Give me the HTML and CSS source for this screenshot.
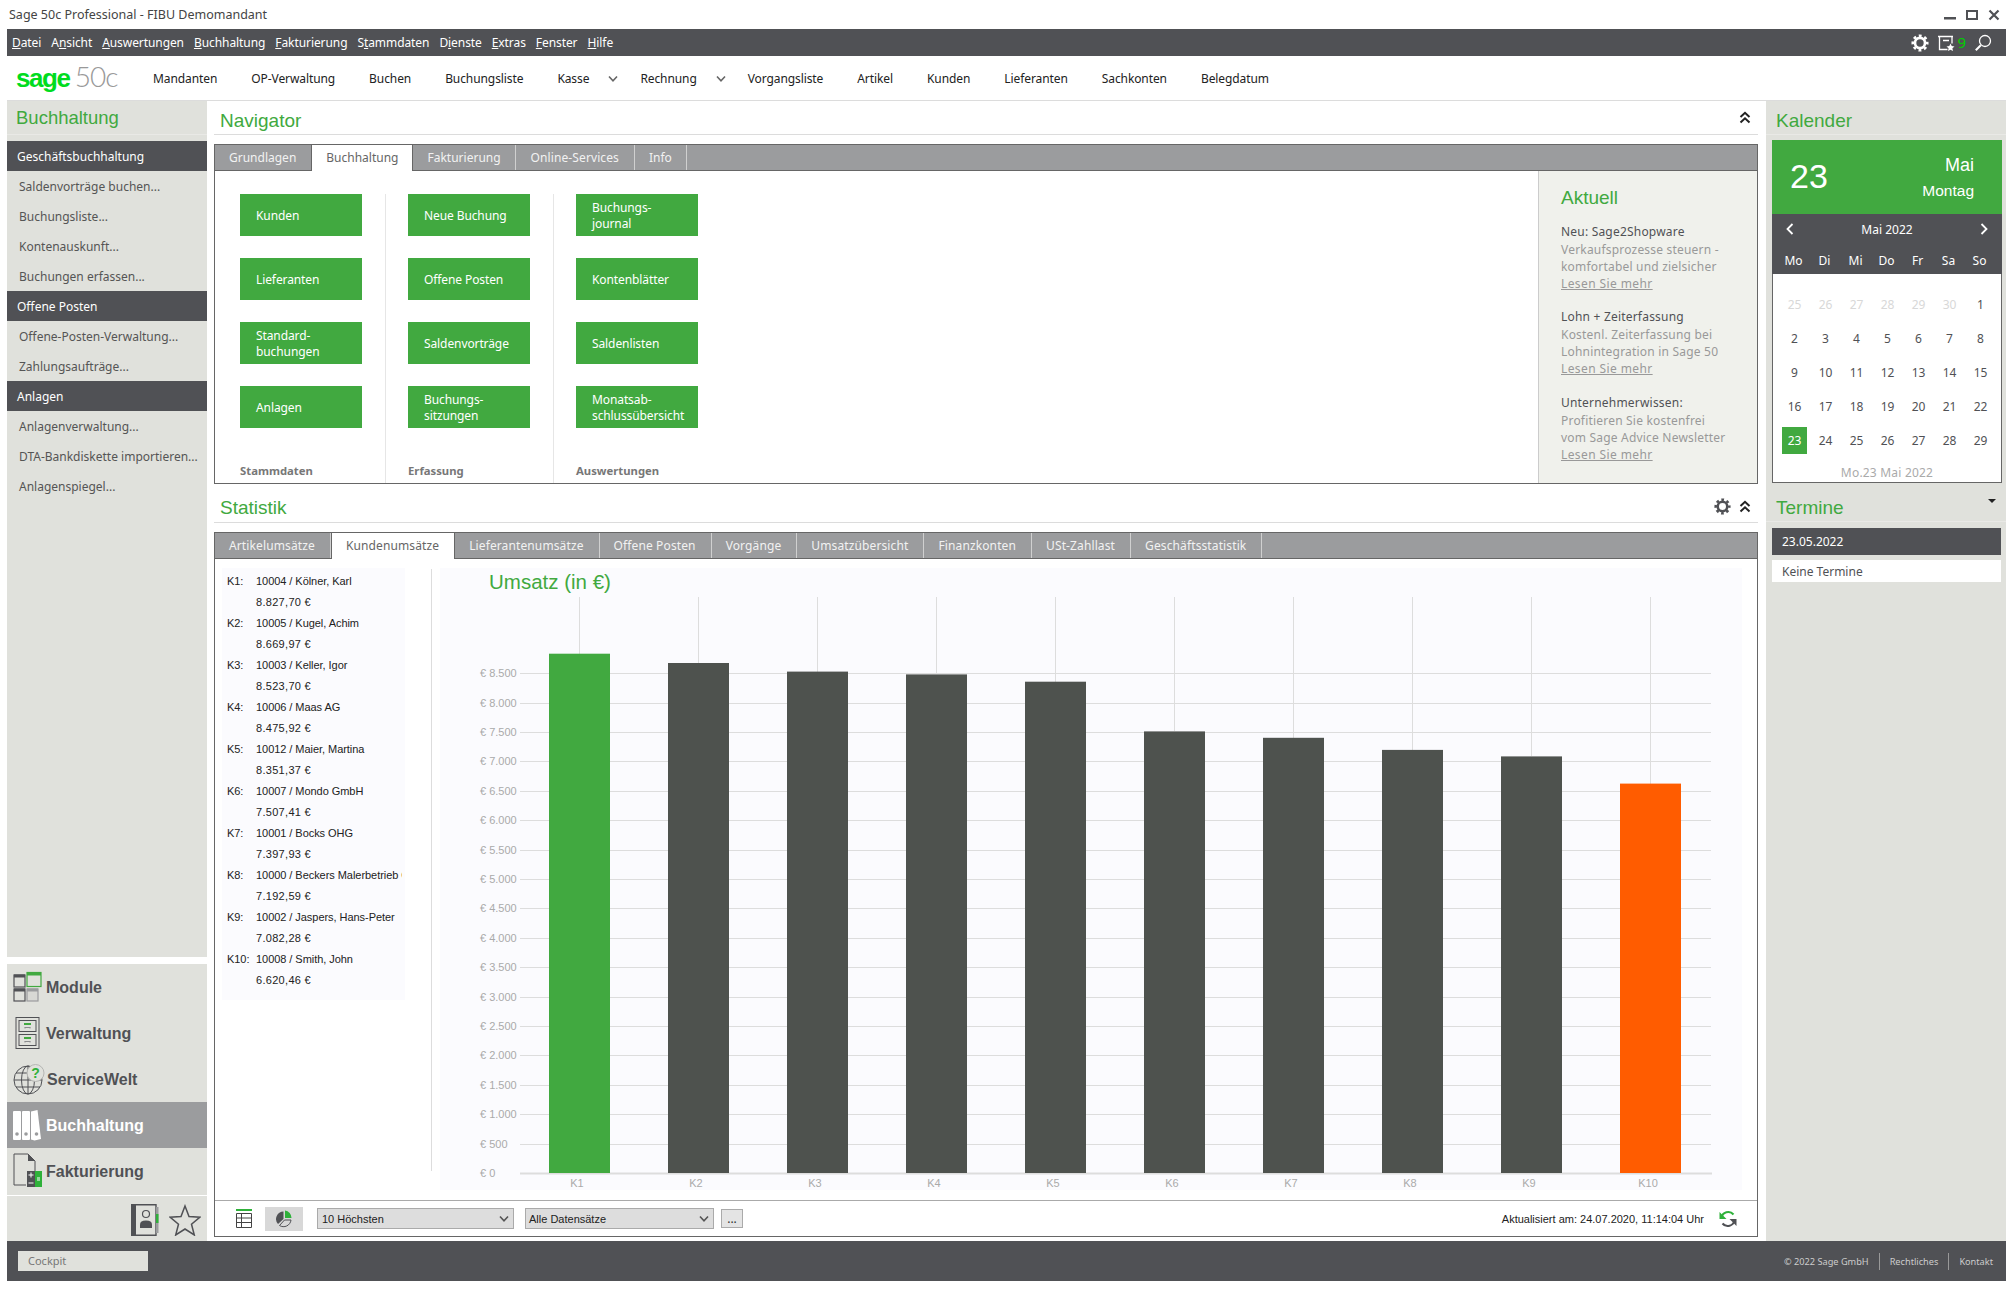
FILE: index.html
```html
<!DOCTYPE html>
<html lang="de">
<head>
  <meta charset="UTF-8" />
  <title>Sage 50c Professional - FIBU Demomandant</title>
  <link rel="stylesheet" href="styles.css">
</head>
<body>

<svg class="sprites" width="0" height="0">
  <symbol id="gear" viewBox="0 0 20 20">
    <circle cx="10" cy="10" r="5.6" fill="none" stroke="currentColor" stroke-width="3"/>
    <circle cx="10" cy="10" r="8" fill="none" stroke="currentColor" stroke-width="3" stroke-dasharray="3.14 3.14" stroke-dashoffset="1.57"/>
  </symbol>
  <symbol id="collapse" viewBox="0 0 12 13">
    <path d="M1.5 6 6 1.8 10.500 6M1.500 11.500 6 7.300l4.500 4.200" fill="none" stroke="currentColor" stroke-width="2"/>
  </symbol>
  <symbol id="chevron" viewBox="0 0 10 8">
    <path d="M1 1.500 5 5.800l4-4.300" fill="none" stroke="currentColor" stroke-width="1.600"/>
  </symbol>
</svg>

<div class="titlebar">
  <span class="title-text">Sage 50c Professional - FIBU Demomandant</span>
  <div class="window-btns">
    <svg width="12" height="12" viewBox="0 0 12 12"><rect x="0" y="8" width="12" height="2.500" fill="#505155"/></svg>
    <svg width="12" height="12" viewBox="0 0 12 12"><rect x="1" y="2" width="10" height="8" fill="none" stroke="#505155" stroke-width="2"/></svg>
    <svg width="12" height="12" viewBox="0 0 12 12"><path d="M1.500 1.500l9 9M10.500 1.500l-9 9" stroke="#505155" stroke-width="2.200"/></svg>
  </div>
</div>

<div class="menubar">
  <span><u>D</u>atei</span>
  <span>A<u>n</u>sicht</span>
  <span><u>A</u>uswertungen</span>
  <span><u>B</u>uchhaltung</span>
  <span><u>F</u>akturierung</span>
  <span>S<u>t</u>ammdaten</span>
  <span>D<u>i</u>enste</span>
  <span><u>E</u>xtras</span>
  <span><u>F</u>enster</span>
  <span><u>H</u>ilfe</span>
  <div class="menu-tools">
    <svg class="tool-gear" width="18" height="18"><use href="#gear"/></svg>
    <svg class="tool-archive" width="18" height="18" viewBox="0 0 18 18">
      <path d="M1 2.500h15M2.500 2.500v13h8M15 2.500v7M6 6.500h6" fill="none" stroke="#fff" stroke-width="1.300"/>
      <path d="M13.500 9.500l1.200 2.600 2.800.3-2.100 1.900.6 2.800-2.500-1.400-2.500 1.400.6-2.800-2.100-1.900 2.800-.3z" fill="#fff"/>
    </svg>
    <span class="tool-count">9</span>
    <svg class="tool-search" width="18" height="18" viewBox="0 0 18 18">
      <circle cx="11" cy="7" r="5.500" fill="none" stroke="#fff" stroke-width="1.300"/>
      <path d="M6.800 11.200 1.800 16.200" stroke="#fff" stroke-width="2"/>
    </svg>
  </div>
</div>

<div class="toolbar">
  <div class="logo"><span class="logo-sage">sage</span><span class="logo-50c">50c</span></div>
  <nav class="toolbar-nav">
    <span>Mandanten</span>
    <span>OP-Verwaltung</span>
    <span>Buchen</span>
    <span>Buchungsliste</span>
    <span class="has-menu">Kasse<svg width="10" height="8"><use href="#chevron"/></svg></span>
    <span class="has-menu">Rechnung<svg width="10" height="8"><use href="#chevron"/></svg></span>
    <span>Vorgangsliste</span>
    <span>Artikel</span>
    <span>Kunden</span>
    <span>Lieferanten</span>
    <span>Sachkonten</span>
    <span>Belegdatum</span>
  </nav>
</div>

<div class="workspace">

  <!-- left column -->
  <aside class="sidebar">
    <div class="sidebar-top">
      <h2 class="sidebar-head">Buchhaltung</h2>
      <div class="side-section">Geschäftsbuchhaltung</div>
      <div class="side-item">Saldenvorträge buchen...</div>
      <div class="side-item">Buchungsliste...</div>
      <div class="side-item">Kontenauskunft...</div>
      <div class="side-item">Buchungen erfassen...</div>
      <div class="side-section">Offene Posten</div>
      <div class="side-item">Offene-Posten-Verwaltung...</div>
      <div class="side-item">Zahlungsaufträge...</div>
      <div class="side-section">Anlagen</div>
      <div class="side-item">Anlagenverwaltung...</div>
      <div class="side-item">DTA-Bankdiskette importieren...</div>
      <div class="side-item">Anlagenspiegel...</div>
    </div>
    <div class="modules">
      <div class="module">
        <svg class="module-icon" width="32" height="32" viewBox="0 0 32 32">
          <rect x="1" y="4" width="11" height="12" fill="none" stroke="#505155" stroke-width="1.200"/>
          <rect x="1" y="3.500" width="11" height="3" fill="#505155"/>
          <rect x="14" y="1.500" width="14" height="14" fill="none" stroke="#41a940" stroke-width="1.200"/>
          <rect x="14" y="1" width="14" height="3.500" fill="#41a940"/>
          <rect x="1" y="18" width="11" height="12" fill="none" stroke="#505155" stroke-width="1.200"/>
          <rect x="1" y="17.500" width="11" height="3" fill="#505155"/>
          <rect x="14" y="18" width="11" height="12" fill="#d8d8d4" stroke="#9b9c9e" stroke-width="1.200"/>
          <rect x="14" y="17.500" width="11" height="3" fill="#9b9c9e"/>
        </svg>
        <span>Module</span>
      </div>
      <div class="module">
        <svg class="module-icon" width="32" height="32" viewBox="0 0 32 32">
          <rect x="3" y="0.500" width="23" height="31" fill="none" stroke="#505155" stroke-width="1"/>
          <rect x="6" y="3.500" width="17" height="11" fill="none" stroke="#505155" stroke-width="1"/>
          <rect x="6" y="17.500" width="17" height="11" fill="none" stroke="#505155" stroke-width="1"/>
          <rect x="11" y="6" width="7" height="2" fill="#41a940"/>
          <rect x="11" y="20" width="7" height="2" fill="#41a940"/>
          <path d="M11.500 10.500h6M12 10.500v1M17 10.500v1M11.500 24.500h6M12 24.500v1M17 24.500v1" stroke="#8a8b8d" stroke-width="1" fill="none"/>
        </svg>
        <span>Verwaltung</span>
      </div>
      <div class="module module-wide">
        <svg class="module-icon" width="32" height="32" viewBox="0 0 32 32">
          <g fill="none" stroke="#505155" stroke-width="1">
            <circle cx="15" cy="17" r="14"/>
            <ellipse cx="15" cy="17" rx="6.500" ry="14"/>
            <path d="M15 3v28M1 17h28M3 10h24M3 24h24"/>
          </g>
          <circle cx="22.500" cy="10" r="8.500" fill="#e0e1dc" stroke="#b5b6b3" stroke-width="1"/>
          <text x="22.500" y="15" class="help-mark">?</text>
        </svg>
        <span>ServiceWelt</span>
      </div>
      <div class="module module-active">
        <svg class="module-icon" width="32" height="32" viewBox="0 0 32 32">
          <g fill="#fff">
            <rect x="0" y="2" width="8" height="29" rx="1"/>
            <rect x="9" y="2" width="8" height="29" rx="1"/>
            <path d="M18 2.500l6.500-1.500 3.500 29-6.500 1.500-3.500-1z"/>
          </g>
          <g fill="#9b9c9e">
            <circle cx="4" cy="25" r="1.800"/><circle cx="13" cy="25" r="1.800"/><circle cx="23.500" cy="25" r="1.800"/>
          </g>
        </svg>
        <span>Buchhaltung</span>
      </div>
      <div class="module">
        <svg class="module-icon" width="32" height="36" viewBox="0 0 32 36">
          <path d="M13 32H1V1h14l7 7v10" fill="none" stroke="#505155" stroke-width="1"/>
          <path d="M15 1l7 7h-7z" fill="#505155"/>
          <rect x="14" y="18" width="8" height="16" fill="#505155"/>
          <rect x="22" y="18" width="7" height="16" fill="#2fb13a"/>
          <path d="M15.500 22h5M18 19.500v5M15.500 30h5M24 25h3M24 27h3" stroke="#fff" stroke-width="1"/>
        </svg>
        <span>Fakturierung</span>
      </div>
      <div class="module-tools">
        <svg width="28" height="32" viewBox="0 0 28 32">
          <rect x="0" y="0" width="5" height="32" fill="#505155"/>
          <path d="M5 .7h20v30.600H5" fill="none" stroke="#505155" stroke-width="1.400"/>
          <rect x="25" y="3" width="2.500" height="26" fill="#9b9c9e"/>
          <rect x="25" y="10" width="2.500" height="9" fill="#2fb13a"/>
          <circle cx="15" cy="10" r="3.500" fill="none" stroke="#505155" stroke-width="1.200"/>
          <path d="M9 24v-3.500c0-2.500 2-4 6-4s6 1.500 6 4V24z" fill="#505155"/>
        </svg>
        <svg width="32" height="32" viewBox="0 0 32 32">
          <path d="M16 2l4 10.500 11 .7-8.500 7 2.800 10.800L16 25l-9.300 6 2.800-10.800-8.500-7 11-.7z" fill="none" stroke="#505155" stroke-width="1.500"/>
        </svg>
      </div>
    </div>
  </aside>

  <!-- middle column -->
  <main class="main">
    <div class="panel-head">
      <h2>Navigator</h2>
      <svg class="head-icon" width="12" height="13"><use href="#collapse"/></svg>
    </div>
    <section class="box nav-box">
      <div class="tabs">
        <span class="tab tab-grund">Grundlagen</span>
        <span class="tab tab-active">Buchhaltung</span>
        <span class="tab">Fakturierung</span>
        <span class="tab tab-wide">Online-Services</span>
        <span class="tab">Info</span>
      </div>
      <div class="nav-body">
        <div class="nav-col nav-col-first">
          <div class="nav-btns">
            <div class="nav-btn">Kunden</div>
            <div class="nav-btn">Lieferanten</div>
            <div class="nav-btn">Standard-<br>buchungen</div>
            <div class="nav-btn">Anlagen</div>
          </div>
          <div class="nav-caption">Stammdaten</div>
        </div>
        <div class="nav-col">
          <div class="nav-btns">
            <div class="nav-btn">Neue Buchung</div>
            <div class="nav-btn">Offene Posten</div>
            <div class="nav-btn">Saldenvorträge</div>
            <div class="nav-btn">Buchungs-<br>sitzungen</div>
          </div>
          <div class="nav-caption">Erfassung</div>
        </div>
        <div class="nav-col nav-col-last">
          <div class="nav-btns">
            <div class="nav-btn">Buchungs-<br>journal</div>
            <div class="nav-btn">Kontenblätter</div>
            <div class="nav-btn">Saldenlisten</div>
            <div class="nav-btn">Monatsab-<br>schlussübersicht</div>
          </div>
          <div class="nav-caption">Auswertungen</div>
        </div>
        <div class="news">
          <h3>Aktuell</h3>
          <div class="news-item">
            <div class="news-title">Neu: Sage2Shopware</div>
            <div>Verkaufsprozesse steuern -</div>
            <div>komfortabel und zielsicher</div>
            <a>Lesen Sie mehr</a>
          </div>
          <div class="news-item news-item-gap">
            <div class="news-title">Lohn + Zeiterfassung</div>
            <div>Kostenl. Zeiterfassung bei</div>
            <div>Lohnintegration in Sage 50</div>
            <a>Lesen Sie mehr</a>
          </div>
          <div class="news-item">
            <div class="news-title">Unternehmerwissen:</div>
            <div>Profitieren Sie kostenfrei</div>
            <div>vom Sage Advice Newsletter</div>
            <a>Lesen Sie mehr</a>
          </div>
        </div>
      </div>
    </section>

    <div class="panel-head panel-head-stat">
      <h2>Statistik</h2>
      <svg class="head-gear" width="17" height="17"><use href="#gear"/></svg>
      <svg class="head-icon" width="12" height="13"><use href="#collapse"/></svg>
    </div>
    <section class="box stat-box">
      <div class="tabs">
        <span class="tab">Artikelumsätze</span>
        <span class="tab tab-active">Kundenumsätze</span>
        <span class="tab">Lieferantenumsätze</span>
        <span class="tab">Offene Posten</span>
        <span class="tab">Vorgänge</span>
        <span class="tab">Umsatzübersicht</span>
        <span class="tab">Finanzkonten</span>
        <span class="tab">USt-Zahllast</span>
        <span class="tab">Geschäftsstatistik</span>
      </div>
      <div class="stat-body">
        <div class="top-list">
          <div class="top-row"><b>K1:</b><span>10004 / Kölner, Karl</span></div>
          <div class="top-row"><b></b><span>8.827,70 €</span></div>
          <div class="top-row"><b>K2:</b><span>10005 / Kugel, Achim</span></div>
          <div class="top-row"><b></b><span>8.669,97 €</span></div>
          <div class="top-row"><b>K3:</b><span>10003 / Keller, Igor</span></div>
          <div class="top-row"><b></b><span>8.523,70 €</span></div>
          <div class="top-row"><b>K4:</b><span>10006 / Maas AG</span></div>
          <div class="top-row"><b></b><span>8.475,92 €</span></div>
          <div class="top-row"><b>K5:</b><span>10012 / Maier, Martina</span></div>
          <div class="top-row"><b></b><span>8.351,37 €</span></div>
          <div class="top-row"><b>K6:</b><span>10007 / Mondo GmbH</span></div>
          <div class="top-row"><b></b><span>7.507,41 €</span></div>
          <div class="top-row"><b>K7:</b><span>10001 / Bocks OHG</span></div>
          <div class="top-row"><b></b><span>7.397,93 €</span></div>
          <div class="top-row"><b>K8:</b><span>10000 / Beckers Malerbetrieb GmbH</span></div>
          <div class="top-row"><b></b><span>7.192,59 €</span></div>
          <div class="top-row"><b>K9:</b><span>10002 / Jaspers, Hans-Peter</span></div>
          <div class="top-row"><b></b><span>7.082,28 €</span></div>
          <div class="top-row"><b>K10:</b><span>10008 / Smith, John</span></div>
          <div class="top-row"><b></b><span>6.620,46 €</span></div>
        </div>
        <div class="stat-divider"></div>
        <svg class="chart" width="1302" height="622" viewBox="440 568 1302 622">
          <text x="489" y="589" class="chart-title">Umsatz (in €)</text>
          <g class="grid">
            <path d="M520 673.500H1711M520 703.500H1711M520 732.500H1711M520 761.500H1711M520 791.500H1711M520 820.500H1711M520 850.500H1711M520 879.500H1711M520 908.500H1711M520 938.500H1711M520 967.500H1711M520 997.500H1711M520 1026.500H1711M520 1055.500H1711M520 1085.500H1711M520 1114.500H1711M520 1144.500H1711"/>
            <path d="M579.500 597V654M698.500 597V663M817.500 597V672M936.500 597V674M1055.500 597V682M1174.500 597V731M1293.500 597V738M1412.500 597V750M1531.500 597V756M1650.500 597V784"/>
          </g>
          <path class="baseline" d="M520 1173.500H1712"/>
          <g class="y-labels">
            <text x="480" y="677">€ 8.500</text>
            <text x="480" y="707">€ 8.000</text>
            <text x="480" y="736">€ 7.500</text>
            <text x="480" y="765">€ 7.000</text>
            <text x="480" y="795">€ 6.500</text>
            <text x="480" y="824">€ 6.000</text>
            <text x="480" y="854">€ 5.500</text>
            <text x="480" y="883">€ 5.000</text>
            <text x="480" y="912">€ 4.500</text>
            <text x="480" y="942">€ 4.000</text>
            <text x="480" y="971">€ 3.500</text>
            <text x="480" y="1001">€ 3.000</text>
            <text x="480" y="1030">€ 2.500</text>
            <text x="480" y="1059">€ 2.000</text>
            <text x="480" y="1089">€ 1.500</text>
            <text x="480" y="1118">€ 1.000</text>
            <text x="480" y="1148">€ 500</text>
            <text x="480" y="1177">€ 0</text>
          </g>
          <rect class="bar-top" x="549" y="653.700" width="61" height="519.300"/>
          <rect class="bar" x="668" y="663" width="61" height="510"/>
          <rect class="bar" x="787" y="671.600" width="61" height="501.400"/>
          <rect class="bar" x="906" y="674.400" width="61" height="498.600"/>
          <rect class="bar" x="1025" y="681.700" width="61" height="491.300"/>
          <rect class="bar" x="1144" y="731.400" width="61" height="441.600"/>
          <rect class="bar" x="1263" y="737.800" width="61" height="435.200"/>
          <rect class="bar" x="1382" y="749.900" width="61" height="423.100"/>
          <rect class="bar" x="1501" y="756.400" width="61" height="416.600"/>
          <rect class="bar-low" x="1620" y="783.600" width="61" height="389.400"/>
          <g class="x-labels">
            <text x="577" y="1187">K1</text>
            <text x="696" y="1187">K2</text>
            <text x="815" y="1187">K3</text>
            <text x="934" y="1187">K4</text>
            <text x="1053" y="1187">K5</text>
            <text x="1172" y="1187">K6</text>
            <text x="1291" y="1187">K7</text>
            <text x="1410" y="1187">K8</text>
            <text x="1529" y="1187">K9</text>
            <text x="1648" y="1187">K10</text>
          </g>
        </svg>
      </div>
      <div class="stat-tools">
        <svg class="icon-table" width="16" height="20" viewBox="0 0 16 20">
          <rect x="0" y="0" width="16" height="2" fill="#2fb13a"/>
          <path d="M.5 4.500h15v14H.5zM.5 9h15M.5 13.500h15M5.500 4.500v14" fill="none" stroke="#444" stroke-width="1"/>
        </svg>
        <div class="view-btn">
          <svg width="16" height="18" viewBox="0 0 16 18">
            <path d="M7.500 1.500A7.500 7.500 0 0 0 2 14l5.500-5z" fill="#505155"/>
            <path d="M9 .500A7.500 7.500 0 0 1 15.500 8H9z" fill="#2fb13a"/>
            <path d="M3.500 15.500 8.500 10h6.500a7.500 7.500 0 0 1-11.500 5.500z" fill="none" stroke="#505155" stroke-width="1"/>
          </svg>
        </div>
        <div class="select select-count">10 Höchsten<svg width="10" height="8"><use href="#chevron"/></svg></div>
        <div class="select select-data">Alle Datensätze<svg width="10" height="8"><use href="#chevron"/></svg></div>
        <div class="more-btn">...</div>
        <div class="updated">Aktualisiert am: 24.07.2020, 11:14:04 Uhr</div>
        <svg class="icon-refresh" width="18" height="18" viewBox="0 0 18 18">
          <path d="M2.500 8A6.800 6.800 0 0 1 14.500 4.500" fill="none" stroke="#2fb13a" stroke-width="2"/>
          <path d="M1 3v7h7z" fill="#2fb13a" transform="translate(-.5 -1)"/>
          <path d="M15.500 10A6.800 6.800 0 0 1 3.500 13.500" fill="none" stroke="#505155" stroke-width="2"/>
          <path d="M17.500 15v-7h-7z" fill="#505155" transform="translate(0 1)"/>
        </svg>
      </div>
    </section>
  </main>

  <!-- right column -->
  <aside class="rightbar">
    <h2 class="right-head">Kalender</h2>
    <div class="cal-today">
      <div class="cal-day">23</div>
      <div class="cal-date">
        <div class="cal-month">Mai</div>
        <div class="cal-weekday">Montag</div>
      </div>
    </div>
    <div class="cal-head">
      <div class="cal-nav">
        <svg width="8" height="12" viewBox="0 0 8 12"><path d="M6.500 1 1.500 6l5 5" fill="none" stroke="#fff" stroke-width="1.800"/></svg>
        <span>Mai 2022</span>
        <svg width="8" height="12" viewBox="0 0 8 12"><path d="M1.500 1l5 5-5 5" fill="none" stroke="#fff" stroke-width="1.800"/></svg>
      </div>
      <div class="cal-grid cal-weekdays">
        <span>Mo</span><span>Di</span><span>Mi</span><span>Do</span><span>Fr</span><span>Sa</span><span>So</span>
      </div>
    </div>
    <div class="cal-body">
      <div class="cal-grid cal-days">
        <span class="muted">25</span><span class="muted">26</span><span class="muted">27</span><span class="muted">28</span><span class="muted">29</span><span class="muted">30</span><span>1</span>
        <span>2</span><span>3</span><span>4</span><span>5</span><span>6</span><span>7</span><span>8</span>
        <span>9</span><span>10</span><span>11</span><span>12</span><span>13</span><span>14</span><span>15</span>
        <span>16</span><span>17</span><span>18</span><span>19</span><span>20</span><span>21</span><span>22</span>
        <span><i>23</i></span><span>24</span><span>25</span><span>26</span><span>27</span><span>28</span><span>29</span>
      </div>
      <div class="cal-foot">Mo.23 Mai 2022</div>
    </div>
    <div class="right-head right-head-dates">
      <h2>Termine</h2>
      <span class="caret"></span>
    </div>
    <div class="date-bar">23.05.2022</div>
    <div class="date-empty">Keine Termine</div>
  </aside>
</div>

<footer class="footer">
  <div class="cockpit">Cockpit</div>
  <div class="footer-links">
    <span>© 2022 Sage GmbH</span>
    <span>Rechtliches</span>
    <span>Kontakt</span>
  </div>
</footer>

</body>
</html>
```

FILE: styles.css
```css
* {
  box-sizing: border-box;
}
body {
  margin: 0;
  width: 2013px;
  height: 1290px;
  padding: 0 7px;
  background: #fff;
  font-family: "Noto Sans", "Liberation Sans", sans-serif;
  font-size: 12px;
  line-height: 17px;
  color: #505155;
  overflow: hidden;
}
h2, h3 {
  margin: 0;
  font-family: "Liberation Sans", sans-serif;
  font-weight: normal;
  font-size: 19px;
  color: #41a940;
}
.sprites {
  position: absolute;
}

/* title + menu */
.titlebar {
  height: 29px;
  margin-left: 2px;
  display: flex;
  align-items: center;
  justify-content: space-between;
  font-size: 12.500px;
  color: #444;
}
.window-btns {
  display: flex;
  gap: 10px;
  margin-right: 6px;
}
.menubar {
  height: 27px;
  padding-left: 5px;
  display: flex;
  align-items: center;
  gap: 10px;
  background: #505155;
  color: #fff;
  letter-spacing: -0.080px;
}
.menu-tools {
  margin-left: auto;
  display: flex;
  align-items: center;
  color: #fff;
}
.tool-gear {
  margin-right: 8px;
}
.tool-count {
  margin: 0 8px 0 2px;
  color: #00d000;
  font-size: 15px;
}
.tool-search {
  margin-right: 14px;
}

/* toolbar */
.toolbar {
  height: 45px;
  display: flex;
  align-items: center;
  border-bottom: 1px solid #dcdcdc;
}
.logo {
  width: 146px;
  height: 36px;
  padding-left: 9px;
  display: flex;
  align-items: baseline;
}
.logo-sage {
  font-family: "Liberation Sans", sans-serif;
  font-weight: bold;
  font-size: 26px;
  line-height: 32px;
  letter-spacing: -1.400px;
  color: #00dc1e;
}
.logo-50c {
  margin-left: 5px;
  font-family: "Lato", sans-serif;
  font-weight: 300;
  font-size: 28px;
  line-height: 32px;
  letter-spacing: -1px;
  color: #999;
}
.toolbar-nav {
  display: flex;
  gap: 34px;
  color: #222;
  letter-spacing: -0.090px;
}
.has-menu {
  margin-right: -12px;
}
.has-menu svg {
  margin-left: 19px;
  color: #666;
}

/* work area */
.workspace {
  height: 1140px;
  display: flex;
}
.sidebar {
  width: 200px;
  display: flex;
  flex-direction: column;
}
.sidebar-top {
  height: 857px;
  background: #e0e1dc;
}
.sidebar-head {
  height: 34px;
  padding: 4px 0 0 9px;
  margin-bottom: 6px;
  border-bottom: 1px solid #e9e9e6;
  font-size: 18.500px;
  line-height: 26px;
}
.side-section {
  height: 30px;
  padding-left: 10px;
  line-height: 32px;
  background: #505155;
  color: #fff;
}
.side-item {
  height: 30px;
  padding-left: 12px;
  line-height: 32px;
  color: #555;
  white-space: nowrap;
}
.modules {
  margin-top: 7px;
  flex: 1;
  background: #e0e1dc;
}
.module {
  height: 46px;
  padding-left: 6px;
  display: flex;
  align-items: center;
  font-family: "Liberation Sans", sans-serif;
  font-weight: bold;
  font-size: 16px;
  color: #505155;
}
.module-icon {
  margin-right: 1px;
  flex: none;
}
.module-wide span {
  margin-left: 1px;
}
.module-active {
  background: #9b9c9e;
  color: #fff;
}
.module-tools {
  height: 46px;
  margin-top: 1px;
  padding: 8px 6px 0 0;
  border-top: 1px solid #fff;
  display: flex;
  justify-content: flex-end;
  gap: 10px;
}
.help-mark {
  font-family: "Liberation Sans", sans-serif;
  font-size: 14px;
  text-anchor: middle;
  fill: #2fb13a;
}

/* middle */
.main {
  flex: 1;
  padding: 0 8px 0 7px;
}
.panel-head {
  height: 34px;
  margin-bottom: 9px;
  padding-left: 6px;
  display: flex;
  align-items: center;
  border-bottom: 1px solid #dcdcdc;
}
.panel-head h2 {
  margin: 5px auto 0 0;
}
.panel-head-stat {
  height: 39px;
  padding-top: 6px;
}
.panel-head-stat h2 {
  margin-top: 3px;
}
.head-icon {
  margin-right: 7px;
  color: #222;
}
.head-gear {
  margin-right: 8px;
  color: #505155;
}
.box {
  border: 1px solid #666;
  display: flex;
  flex-direction: column;
}
.nav-box {
  height: 340px;
}
.stat-box {
  height: 705px;
}
.tabs {
  height: 26px;
  flex: none;
  display: flex;
  background: #9b9c9e;
  border-bottom: 1px solid #666;
}
.tab {
  height: 25px;
  padding: 0 15px 0 14px;
  line-height: 25px;
  color: #f2f2f2;
  border-right: 1px solid #d0d0d0;
  white-space: nowrap;
}
.stat-box .tab {
  letter-spacing: 0.120px;
}
.nav-box .tab {
  padding: 0 14px;
}
.nav-box .tab-grund {
  padding-right: 15px;
  border-right: 0;
}
.nav-box .tab-wide {
  padding: 0 15px;
  letter-spacing: 0.100px;
}
.tab-active {
  height: 26px;
  background: #fff;
  color: #666;
  border-right: 1px solid #666;
  border-left: 1px solid #666;
}
.nav-body {
  flex: 1;
  display: flex;
}
.nav-col {
  width: 168px;
  margin-top: 23px;
  padding-left: 22px;
  display: flex;
  flex-direction: column;
  justify-content: space-between;
  border-right: 1px solid #e6e6e6;
}
.nav-col-first {
  width: 171px;
  padding-left: 25px;
}
.nav-col-last {
  flex: 1;
  border-right: 0;
}
.nav-btns {
  width: 122px;
  display: flex;
  flex-direction: column;
  gap: 22px;
}
.nav-btn {
  height: 42px;
  padding: 2px 0 0 16px;
  display: flex;
  align-items: center;
  line-height: 16px;
  background: #41a940;
  color: #fff;
  white-space: nowrap;
  letter-spacing: -0.100px;
}
.nav-caption {
  padding-bottom: 4px;
  font-size: 11.300px;
  font-weight: bold;
  color: #777;
}
.news {
  width: 219px;
  padding: 15px 0 0 22px;
  background: #f0f1ec;
  border-left: 1px solid #ccc;
  color: #999;
}
.news h3 {
  margin-bottom: 13px;
  line-height: 24px;
}
.news-title {
  line-height: 18px;
  color: #505155;
}
.news-item {
  margin-bottom: 16px;
  letter-spacing: 0.200px;
}
.news-item-gap {
  margin-bottom: 17px;
}
.news-item a {
  text-decoration: underline;
  letter-spacing: 0.400px;
}

/* stat area */
.stat-body {
  height: 641px;
  flex: none;
  display: flex;
  align-items: flex-start;
}
.top-list {
  width: 183px;
  margin: 9px 0 0 7px;
  padding: 3px 3px 9px 5px;
  background: #fbfbfe;
  font-family: "Liberation Sans", sans-serif;
  font-size: 11px;
  letter-spacing: -0.050px;
  color: #222;
}
.top-row {
  height: 21px;
  line-height: 21px;
  display: flex;
  white-space: nowrap;
  overflow: hidden;
}
.top-row b {
  width: 29px;
  flex: none;
  font-weight: normal;
}
.top-row b:empty + span {
  letter-spacing: 0.300px;
}
.stat-divider {
  width: 1px;
  height: 602px;
  margin: 10px 0 0 26px;
  background: #ddd;
}
.chart {
  margin: 9px 0 0 8px;
  background: #fbfbfe;
  font-family: "Liberation Sans", sans-serif;
}
.chart-title {
  font-size: 20.500px;
  fill: #41a940;
}
.grid path {
  stroke: #dddddd;
  stroke-width: 1;
}
.baseline {
  stroke: #dddddd;
  stroke-width: 2;
}
.y-labels text {
  font-size: 11px;
  fill: #aaa;
}
.x-labels text {
  font-size: 11px;
  fill: #aaa;
  text-anchor: middle;
}
.bar-top {
  fill: #41a940;
}
.bar {
  fill: #4e524e;
}
.bar-low {
  fill: #ff5c00;
}
.stat-tools {
  flex: 1;
  padding-left: 21px;
  display: flex;
  align-items: center;
  border-top: 1px solid #aaa;
}
.view-btn {
  width: 38px;
  height: 24px;
  margin-left: 13px;
  display: flex;
  align-items: center;
  justify-content: center;
  background: #d8d8d8;
}
.select {
  height: 21px;
  padding: 1px 4px 0 4px;
  display: flex;
  align-items: center;
  justify-content: space-between;
  background: #dddddd;
  border: 1px solid #aaa;
  font-family: "Liberation Sans", sans-serif;
  font-size: 11px;
  color: #222;
}
.select svg {
  color: #555;
}
.select-count {
  width: 197px;
  margin-left: 14px;
}
.select-data {
  width: 189px;
  margin-left: 11px;
  padding-left: 3px;
}
.more-btn {
  width: 22px;
  height: 19px;
  margin-left: 7px;
  text-align: center;
  background: #e4e4e4;
  border: 1px solid #aaa;
  color: #333;
}
.updated {
  margin-left: auto;
  padding-top: 1px;
  font-family: "Liberation Sans", sans-serif;
  font-size: 11px;
  color: #222;
}
.icon-refresh {
  margin: 0 20px 0 15px;
}

/* right */
.rightbar {
  width: 240px;
  padding: 0 4px 0 6px;
  background: #e0e1dc;
}
.right-head {
  height: 34px;
  margin: 0 -4px 5px -6px;
  padding: 7px 0 0 10px;
  line-height: 26px;
  border-bottom: 1px solid #e9e9e6;
}
.right-head-dates {
  height: 39px;
  padding-top: 12px;
  display: flex;
  justify-content: space-between;
  margin-bottom: 6px;
}
.caret {
  width: 0;
  height: 0;
  margin: 0 10px 0 0;
  border-left: 4px solid transparent;
  border-right: 4px solid transparent;
  border-top: 4px solid #222;
  transform: translateY(4px);
}
.cal-today {
  height: 74px;
  padding: 0 28px 0 18px;
  display: flex;
  align-items: center;
  justify-content: space-between;
  background: #41a940;
  color: #fff;
  font-family: "Liberation Sans", sans-serif;
}
.cal-day {
  font-size: 34px;
  line-height: 40px;
  padding-bottom: 2px;
}
.cal-date {
  padding-top: 2px;
  text-align: right;
}
.cal-month {
  font-size: 18px;
  line-height: 26px;
}
.cal-weekday {
  font-size: 15.500px;
  line-height: 26px;
}
.cal-head {
  height: 60px;
  background: #505155;
  color: #fff;
}
.cal-nav {
  height: 30px;
  padding: 0 14px 0 14px;
  display: flex;
  align-items: center;
  justify-content: space-between;
}
.cal-grid {
  padding-left: 6px;
  display: grid;
  grid-template-columns: repeat(7, 31px);
  text-align: center;
}
.cal-weekdays {
  height: 30px;
  line-height: 34px;
}
.cal-body {
  height: 209px;
  padding-top: 14px;
  background: #fff;
  border: 1px solid #666;
  border-top: 0;
}
.cal-days span {
  height: 34px;
  line-height: 34px;
  color: #505155;
}
.cal-days .muted {
  color: #d8d8d8;
}
.cal-days i {
  width: 25px;
  height: 27px;
  margin: 3px auto 0;
  display: block;
  line-height: 27px;
  font-style: normal;
  background: #41a940;
  color: #fff;
}
.cal-foot {
  line-height: 30px;
  text-align: center;
  letter-spacing: 0.200px;
  color: #aaa;
}
.date-bar {
  width: 229px;
  height: 27px;
  padding-left: 10px;
  line-height: 27px;
  background: #505155;
  color: #fff;
}
.date-empty {
  width: 229px;
  height: 22px;
  margin-top: 5px;
  padding-left: 10px;
  line-height: 24px;
  background: #fff;
}

/* footer */
.footer {
  height: 40px;
  padding: 0 13px 0 11px;
  display: flex;
  align-items: center;
  justify-content: space-between;
  background: #505155;
}
.cockpit {
  width: 130px;
  height: 20px;
  padding-left: 10px;
  line-height: 20px;
  font-size: 11px;
  background: #e0e1dc;
  color: #777;
}
.footer-links {
  display: flex;
  font-size: 9.200px;
  color: #ccc;
}
.footer-links span + span {
  margin-left: 10px;
  padding-left: 10px;
  border-left: 1px solid #999;
}
```
